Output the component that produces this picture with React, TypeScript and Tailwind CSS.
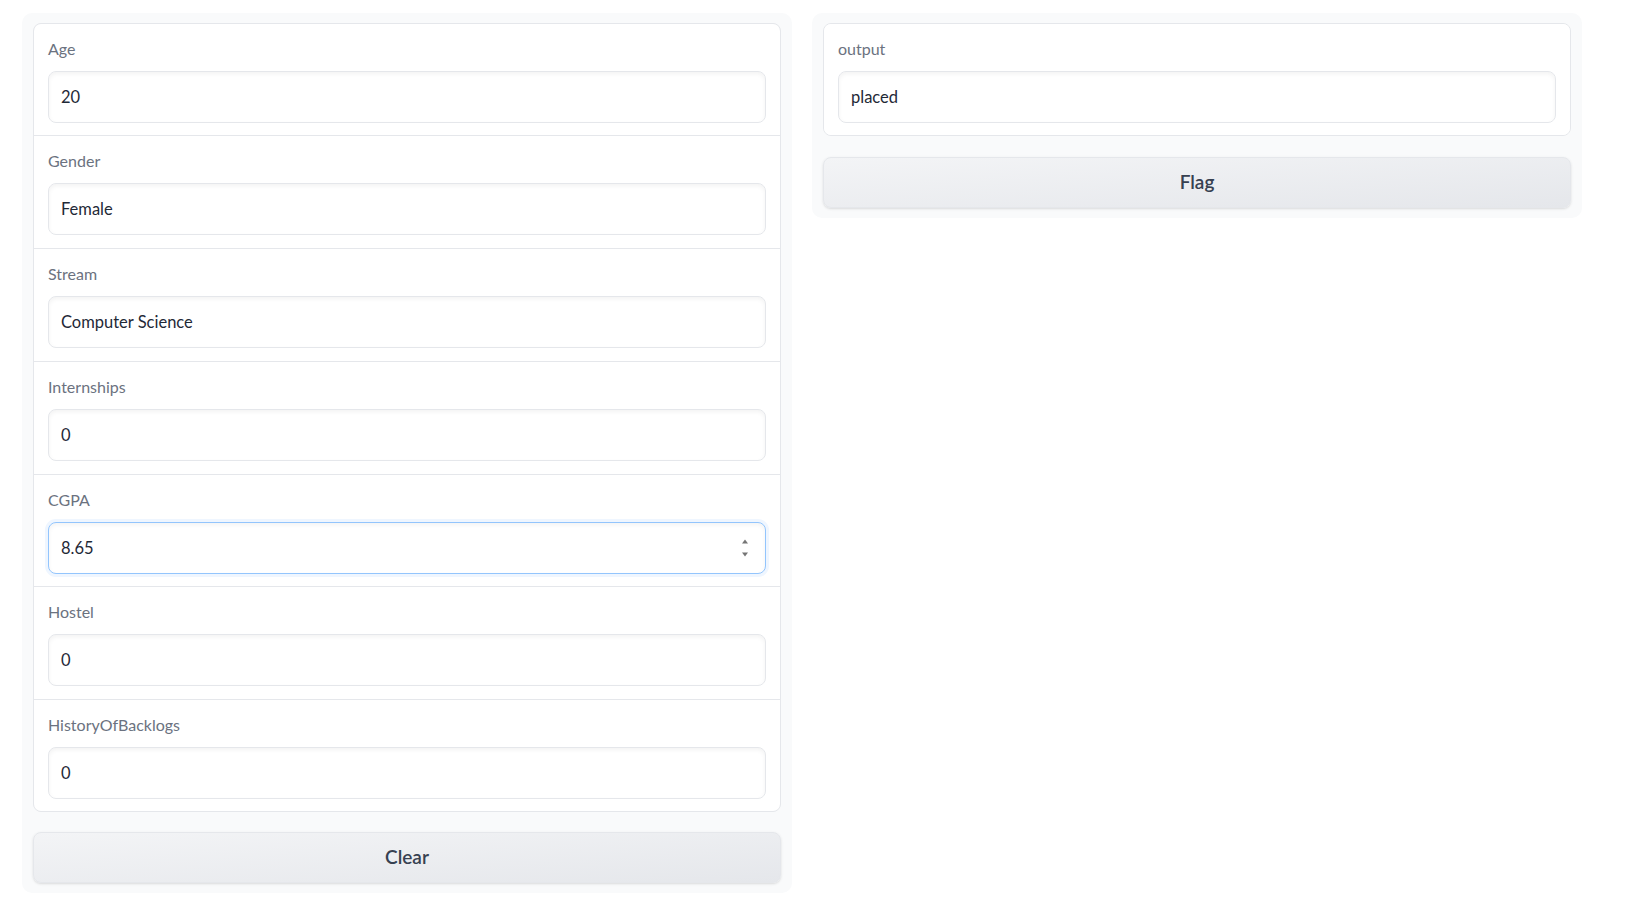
const inputs = [
  { label: "Age", value: "20", tight: true },
  { label: "Gender", value: "Female" },
  { label: "Stream", value: "Computer Science" },
  { label: "Internships", value: "0" },
  { label: "CGPA", value: "8.65", focused: true, tight: true },
  { label: "Hostel", value: "0" },
  { label: "HistoryOfBacklogs", value: "0", tight: true },
];

function Field({
  label,
  value,
  focused,
  tight,
}: {
  label: string;
  value: string;
  focused?: boolean;
  tight?: boolean;
}) {
  return (
    <div className={`bg-white pt-[14px] px-[14px] ${tight ? "pb-[12px]" : "pb-[13px]"}`}>
      <div className="h-[22px] leading-[22px] mb-[11px] text-[16px] text-[#6b7280]">{label}</div>
      <div className="relative">
        <input
          readOnly
          value={value}
          className={`block w-full h-[52px] rounded-[8px] border bg-white pl-[12px] pr-[13px] text-[16.5px] text-[#1f2937] outline-none ${
            focused
              ? "border-[#93c5fd] shadow-[inset_0_2px_4px_rgba(0,0,0,0.05),0_0_0_3px_#eff6ff]"
              : "border-[#e5e7eb] shadow-[inset_0_2px_4px_rgba(0,0,0,0.05)]"
          }`}
          style={{ fontFamily: "inherit" }}
        />
        {focused && (
          <svg
            className="absolute right-[17px] top-1/2 -translate-y-1/2"
            width="8"
            height="20"
            viewBox="0 0 8 20"
          >
            <path d="M4 1.5 L7 5.5 L1 5.5 Z" fill="#757575" />
            <path d="M1 14.5 L7 14.5 L4 18.5 Z" fill="#757575" />
          </svg>
        )}
      </div>
    </div>
  );
}

function Button({ children }: { children: string }) {
  return (
    <button className="h-[51px] w-full rounded-[8px] border border-[#e5e7eb] bg-linear-to-br from-[#f3f4f6] to-[#e5e7eb] text-[19px] font-semibold text-[#374151] shadow-sm">
      {children}
    </button>
  );
}

export default function App() {
  return (
    <div
      className="min-h-screen bg-white pt-[13px] pl-[22px]"
      style={{ fontFamily: "Lato, 'Noto Sans', sans-serif" }}
    >
      <div className="flex items-start gap-[20px]">
        <div className="w-[770px] rounded-[10px] bg-[#f9fafb] px-[11px] py-[10px] flex flex-col gap-[20px]">
          <div className="flex flex-col gap-px overflow-hidden rounded-[8px] border border-[#e5e7eb] bg-[#e5e7eb]">
            {inputs.map((f) => (
              <Field key={f.label} {...f} />
            ))}
          </div>
          <Button>Clear</Button>
        </div>

        <div className="w-[770px] rounded-[10px] bg-[#f9fafb] px-[11px] py-[10px] flex flex-col gap-[21px]">
          <div className="overflow-hidden rounded-[8px] border border-[#e5e7eb] bg-white">
            <Field label="output" value="placed" tight />
          </div>
          <Button>Flag</Button>
        </div>
      </div>
    </div>
  );
}
